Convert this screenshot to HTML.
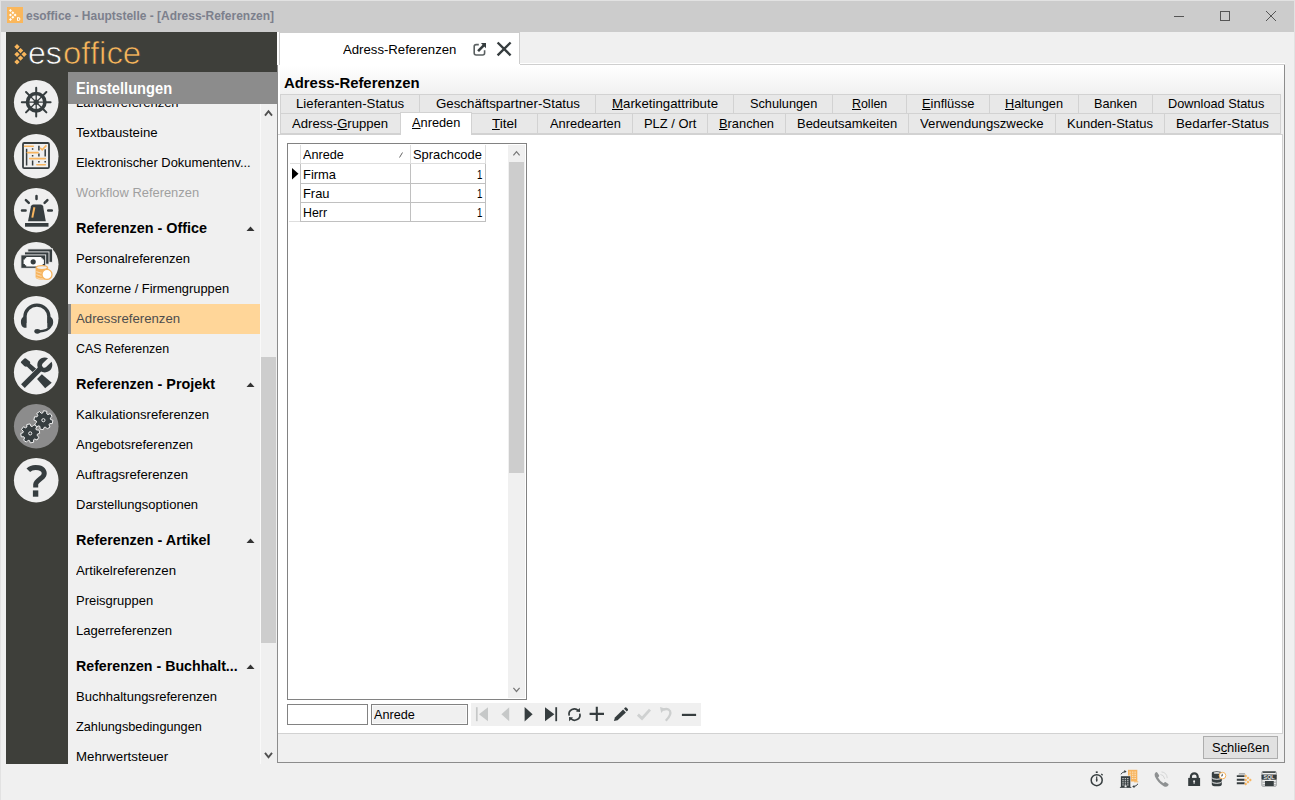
<!DOCTYPE html>
<html lang="de">
<head>
<meta charset="utf-8">
<title>esoffice - Hauptstelle - [Adress-Referenzen]</title>
<style>
*{box-sizing:border-box;margin:0;padding:0}
html,body{width:1295px;height:800px;overflow:hidden;background:#f0f0f0;font-family:"Liberation Sans",sans-serif;font-size:13px;color:#000}
.a{position:absolute}
.t{position:absolute;white-space:pre;line-height:1;transform-origin:0 0;display:block}
u{text-decoration:underline;text-underline-offset:1px}
svg{position:absolute;overflow:visible}
</style>
</head>
<body>
<!-- title bar -->
<div class="a" style="left:0px;top:0px;width:1295px;height:32px;background:#cccccc;"></div>
<div class="a" style="left:0px;top:0px;width:1295px;height:1px;background:#e2e2e2;"></div>
<div class="a" style="left:0px;top:0px;width:1px;height:800px;background:#e2e2e2;"></div>
<div class="a" style="left:1294px;top:0px;width:1px;height:800px;background:#e2e2e2;"></div>
<span class="t" style="left:26.10px;top:10.34px;font-size:12px;font-weight:bold;color:#7c808c;transform:scaleX(0.9974);">esoffice - Hauptstelle - [Adress-Referenzen]</span>
<svg style="left:1160px;top:0" width="135" height="32" viewBox="0 0 135 32" fill="none" stroke="#555" stroke-width="1"><path d="M14 16.5h10"/><rect x="60.5" y="11.5" width="9" height="9"/><path d="M106 11l10 10M116 11l-10 10"/></svg>
<svg style="left:7px;top:7px" width="16" height="16" viewBox="0 0 16 16"><rect width="16" height="16" fill="#fab75c"/><path d="M3.45 2.00L4.90 3.45L3.45 4.90L2.00 3.45zM5.85 4.25L7.30 5.70L5.85 7.15L4.40 5.70zM3.45 6.50L4.90 7.95L3.45 9.40L2.00 7.95zM8.10 6.50L9.55 7.95L8.10 9.40L6.65 7.95zM5.85 8.75L7.30 10.20L5.85 11.65L4.40 10.20zM3.45 11.00L4.90 12.45L3.45 13.90L2.00 12.45z" fill="#fff"/><path d="M10 10.3h1.8q1.6 0 1.6 1.75t-1.6 1.75H10zM11 11.2v1.7h0.7q0.7 0 0.7-0.85t-0.7-0.85z" fill="#fff" fill-rule="evenodd"/></svg>
<!-- sidebar -->
<div class="a" style="left:6px;top:32px;width:271px;height:732px;background:#3e3f3a;"></div>
<svg style="left:0;top:0" width="40" height="70" viewBox="0 0 40 70"><path d="M17.00 44.10L19.70 46.80L17.00 49.50L14.30 46.80zM20.55 47.90L23.25 50.60L20.55 53.30L17.85 50.60zM17.00 51.65L19.70 54.35L17.00 57.05L14.30 54.35zM24.10 51.65L26.80 54.35L24.10 57.05L21.40 54.35zM20.55 55.40L23.25 58.10L20.55 60.80L17.85 58.10zM17.00 59.20L19.70 61.90L17.00 64.60L14.30 61.90z" fill="#f9b65c"/></svg>
<span class="t" style="left:28.00px;top:36.51px;font-size:32px;color:#fff;transform:scaleX(1.0031);-webkit-text-stroke:0.7px #3e3f3a;">es</span>
<span class="t" style="left:62.50px;top:36.51px;font-size:32px;color:#f9b65c;transform:scaleX(1.0302);-webkit-text-stroke:0.7px #3e3f3a;">office</span>
<div class="a" style="left:68px;top:72px;width:209px;height:32px;background:#8c8c8c;"></div>
<div class="a" style="left:68px;top:104px;width:192px;height:660px;background:#f0f0f0;"></div>
<div class="a" style="left:260px;top:104px;width:17px;height:660px;background:#f0f0f0;"></div>
<div class="a" style="left:260px;top:104px;width:1px;height:660px;background:#f9f9f9;"></div>
<div class="a" style="left:261px;top:357px;width:15px;height:286px;background:#cdcdcd;"></div>
<div class="a" style="left:68px;top:304px;width:192px;height:30px;background:#ffd699;"></div>
<div class="a" style="left:68px;top:304px;width:3px;height:30px;background:#8c8c8c;"></div>
<div class="a" style="left:68px;top:104px;width:192px;height:20px;overflow:hidden">
<span class="t" style="left:8.10px;top:-8.00px;transform:scaleX(0.9996);">Länderreferenzen</span>
</div>
<span class="t" style="left:76.10px;top:81.46px;font-size:16px;font-weight:bold;color:#fff;transform:scaleX(0.9161);">Einstellungen</span>
<span class="t" style="left:76.10px;top:126.00px;transform:scaleX(1.0170);">Textbausteine</span>
<span class="t" style="left:76.10px;top:156.00px;transform:scaleX(0.9923);">Elektronischer Dokumentenv...</span>
<span class="t" style="left:76.10px;top:186.00px;color:#a0a0a0;transform:scaleX(0.9924);">Workflow Referenzen</span>
<span class="t" style="left:76.10px;top:252.00px;transform:scaleX(1.0056);">Personalreferenzen</span>
<span class="t" style="left:76.10px;top:282.00px;transform:scaleX(0.9899);">Konzerne / Firmengruppen</span>
<span class="t" style="left:76.10px;top:312.00px;color:#4d4d4d;transform:scaleX(1.0144);">Adressreferenzen</span>
<span class="t" style="left:76.10px;top:342.00px;transform:scaleX(0.9543);">CAS Referenzen</span>
<span class="t" style="left:76.10px;top:408.00px;transform:scaleX(1.0064);">Kalkulationsreferenzen</span>
<span class="t" style="left:76.10px;top:438.00px;transform:scaleX(1.0001);">Angebotsreferenzen</span>
<span class="t" style="left:76.10px;top:468.00px;transform:scaleX(1.0138);">Auftragsreferenzen</span>
<span class="t" style="left:76.10px;top:498.00px;transform:scaleX(0.9997);">Darstellungsoptionen</span>
<span class="t" style="left:76.10px;top:564.00px;transform:scaleX(1.0185);">Artikelreferenzen</span>
<span class="t" style="left:76.10px;top:594.00px;transform:scaleX(0.9970);">Preisgruppen</span>
<span class="t" style="left:76.10px;top:624.00px;transform:scaleX(1.0073);">Lagerreferenzen</span>
<span class="t" style="left:76.10px;top:690.00px;transform:scaleX(1.0012);">Buchhaltungsreferenzen</span>
<span class="t" style="left:76.10px;top:720.00px;transform:scaleX(0.9777);">Zahlungsbedingungen</span>
<span class="t" style="left:76.10px;top:750.00px;transform:scaleX(1.0198);">Mehrwertsteuer</span>
<span class="t" style="left:76.10px;top:221.15px;font-size:14px;font-weight:bold;transform:scaleX(1.0275);">Referenzen - Office</span>
<svg style="left:246px;top:226px" width="9" height="5" viewBox="0 0 9 5"><path d="M0.5 5L4.5 0.6L8.5 5z" fill="#333"/></svg>
<span class="t" style="left:76.10px;top:377.15px;font-size:14px;font-weight:bold;transform:scaleX(1.0275);">Referenzen - Projekt</span>
<svg style="left:246px;top:382px" width="9" height="5" viewBox="0 0 9 5"><path d="M0.5 5L4.5 0.6L8.5 5z" fill="#333"/></svg>
<span class="t" style="left:76.10px;top:533.15px;font-size:14px;font-weight:bold;transform:scaleX(1.0270);">Referenzen - Artikel</span>
<svg style="left:246px;top:538px" width="9" height="5" viewBox="0 0 9 5"><path d="M0.5 5L4.5 0.6L8.5 5z" fill="#333"/></svg>
<span class="t" style="left:76.10px;top:659.15px;font-size:14px;font-weight:bold;transform:scaleX(1.0140);">Referenzen - Buchhalt...</span>
<svg style="left:246px;top:664px" width="9" height="5" viewBox="0 0 9 5"><path d="M0.5 5L4.5 0.6L8.5 5z" fill="#333"/></svg>
<svg style="left:260px;top:104px" width="17" height="17" viewBox="0 0 17 17" fill="none" stroke="#505050" stroke-width="1.9"><path d="M5 11.6L8.5 7.2l3.5 4.4"/></svg>
<svg style="left:260px;top:747px" width="17" height="17" viewBox="0 0 17 17" fill="none" stroke="#505050" stroke-width="1.9"><path d="M5 5.9L8.5 10.3l3.5-4.4"/></svg>
<svg style="left:14px;top:80px" width="45" height="45" viewBox="0 0 45 45"><circle cx="22.2" cy="22.2" r="22.3" fill="#efefef"/><g stroke="#363d3f" fill="none" stroke-linecap="round"><circle cx="22.2" cy="22.2" r="8.7" stroke-width="3.6"/><path d="M22.20 22.20L29.70 22.20M22.20 22.20L27.50 27.50M22.20 22.20L22.20 29.70M22.20 22.20L16.90 27.50M22.20 22.20L14.70 22.20M22.20 22.20L16.90 16.90M22.20 22.20L22.20 14.70M22.20 22.20L27.50 16.90" stroke-width="1.3"/><path d="M32.20 22.20L36.60 22.20M29.27 29.27L32.38 32.38M22.20 32.20L22.20 36.60M15.13 29.27L12.02 32.38M12.20 22.20L7.80 22.20M15.13 15.13L12.02 12.02M22.20 12.20L22.20 7.80M29.27 15.13L32.38 12.02" stroke-width="2"/></g><circle cx="22.2" cy="22.2" r="2.6" fill="#363d3f"/></svg>
<svg style="left:14px;top:134px" width="45" height="45" viewBox="0 0 45 45"><circle cx="22.2" cy="22.2" r="22.3" fill="#efefef"/><rect x="9" y="9" width="26" height="25.2" rx="1.2" fill="none" stroke="#363d3f" stroke-width="1.8"/><g stroke="#363d3f" stroke-width="1.5" fill="none"><path d="M12.6 14.7V31.5M18.6 14.3v1.5M18.6 20.9v1.5M18.6 26.6v4.9M24.9 11.7v4.8M24.9 19.5v3M24.9 26.9v1.5M31.2 15.2v7.3M31.2 26.9v1.5"/></g><g stroke="#f7b45e" stroke-width="1.6" fill="none" stroke-linecap="round"><path d="M10.6 12.2h8.7M13.3 18.6h10.8M15.7 24.6h15.6M22.9 30.7h8.4"/><path d="M26.1 13.8l2.1 2.1l4.2-4.5" stroke-linecap="butt"/></g></svg>
<svg style="left:14px;top:188px" width="45" height="45" viewBox="0 0 45 45"><circle cx="22.2" cy="22.2" r="22.3" fill="#efefef"/><rect x="11" y="35" width="23.5" height="3.7" fill="#363d3f"/><path d="M14 33.3L17 18.3Q17.4 16.4 19.4 16.4H26.7Q28.7 16.4 29.1 18.3L31.8 33.3z" fill="#363d3f"/><path d="M20.4 19.2L18.3 29.6" stroke="#f7b45e" stroke-width="2"/><g stroke="#363d3f" stroke-width="2.5" stroke-linecap="round"><path d="M22.5 8v3M11.9 12.1l2.9 2.7M33.4 12.1l-2.8 2.8M8 22.5h3.6M34.2 22.5h3.6"/></g></svg>
<svg style="left:14px;top:242px" width="45" height="45" viewBox="0 0 45 45"><circle cx="22.2" cy="22.2" r="22.3" fill="#efefef"/><g fill="#363d3f" stroke="#efefef" stroke-width="0.9"><rect x="13.8" y="6.9" width="24.8" height="13.4"/><rect x="10.5" y="9.9" width="24.5" height="12.3"/><rect x="6.9" y="12.9" width="24.8" height="13.4"/></g><path d="M12.2 15h15.2v1.3h1.3v1.3h1.2v4.4h-1.2v1.3h-1.3v1.3H12.2v-1.3h-1.3v-1.3H9.6v-4.4h1.3v-1.3h1.3z" fill="#fbfbfb"/><circle cx="19.2" cy="19.8" r="2.6" fill="#363d3f"/><path d="M21.6 25.6V35.2A6.3 2.6 0 0 0 34.2 35.2V25.6z" fill="#f7b45e"/><ellipse cx="27.9" cy="25.6" rx="5.6" ry="2" fill="#efefef" stroke="#f7b45e" stroke-width="1.3"/><g fill="none" stroke="#fbe3c2" stroke-width="0.8"><path d="M22.4 29.6Q27 32 31 30.8M22.4 32.7Q27 35.1 31 33.9M22.4 35.6Q26 37.6 30 36.8"/></g><circle cx="33" cy="32.4" r="5" fill="#fff" stroke="#f7b45e" stroke-width="1.3"/></svg>
<svg style="left:14px;top:296px" width="45" height="45" viewBox="0 0 45 45"><circle cx="22.2" cy="22.2" r="22.3" fill="#efefef"/><path d="M10.8 27V21.2A12.1 12.1 0 0 1 35 21.2V27" fill="none" stroke="#363d3f" stroke-width="3.3"/><path d="M12.5 20.4V31.7H10.2Q6.9 30.5 6.9 26T10.2 20.4zM33.3 20.4V31.7H35.6Q39.2 30.5 39.2 26T35.6 20.4z" fill="#363d3f"/><path d="M36.3 30.5Q34 35 25 35.4" fill="none" stroke="#363d3f" stroke-width="2.5"/><ellipse cx="23.3" cy="35.3" rx="3" ry="2.4" fill="#363d3f"/></svg>
<svg style="left:14px;top:350px" width="45" height="45" viewBox="0 0 45 45"><circle cx="22.2" cy="22.2" r="22.3" fill="#efefef"/><path d="M23.05 29.05L27.85 24.25L37.75 32.65L31.15 38.35z" fill="#363d3f"/><path d="M7.2 11.4L10.4 8.6Q11.2 8 12 8.6L15.8 11.6Q16.6 12.6 16 13.6L22.2 18.8L18.6 22L12.8 16.6Q11.4 17 10.2 16L7 12.8Q6.6 12 7.2 11.4z" fill="#363d3f"/><path d="M8.9 36.1L27.5 17.5" stroke="#363d3f" stroke-width="5.2" fill="none"/><path d="M34.03 8.13A7.50 7.50 0 1 0 37.57 11.67L32.14 17.09A2.50 2.50 0 0 1 28.61 13.56z" fill="#363d3f"/></svg>
<svg style="left:14px;top:404px" width="45" height="45" viewBox="0 0 45 45"><circle cx="22.2" cy="22.2" r="22.3" fill="#8c8c8c"/><g fill="#363d3f" stroke="#f4f4f4" stroke-width="0.9" stroke-linejoin="round"><path d="M36.29 14.11L38.75 14.53L38.75 17.87L36.29 18.29L35.75 19.59L37.19 21.63L34.83 23.99L32.79 22.55L31.49 23.09L31.07 25.55L27.73 25.55L27.31 23.09L26.01 22.55L23.97 23.99L21.61 21.63L23.05 19.59L22.51 18.29L20.05 17.87L20.05 14.53L22.51 14.11L23.05 12.81L21.61 10.77L23.97 8.41L26.01 9.85L27.31 9.31L27.73 6.85L31.07 6.85L31.49 9.31L32.79 9.85L34.83 8.41L37.19 10.77L35.75 12.81z" transform="rotate(11 29.4 16.2)"/><path d="M23.09 27.31L25.55 27.73L25.55 31.07L23.09 31.49L22.55 32.79L23.99 34.83L21.63 37.19L19.59 35.75L18.29 36.29L17.87 38.75L14.53 38.75L14.11 36.29L12.81 35.75L10.77 37.19L8.41 34.83L9.85 32.79L9.31 31.49L6.85 31.07L6.85 27.73L9.31 27.31L9.85 26.01L8.41 23.97L10.77 21.61L12.81 23.05L14.11 22.51L14.53 20.05L17.87 20.05L18.29 22.51L19.59 23.05L21.63 21.61L23.99 23.97L22.55 26.01z" transform="rotate(-11 16.2 29.4)"/></g><circle cx="29.4" cy="16.2" r="1.6" fill="#363d3f" stroke="#eee" stroke-width="1"/><circle cx="16.2" cy="29.4" r="1.6" fill="#363d3f" stroke="#eee" stroke-width="1"/></svg>
<svg style="left:14px;top:458px" width="45" height="45" viewBox="0 0 45 45"><circle cx="22.2" cy="22.2" r="22.3" fill="#efefef"/><path d="M14.3 12.2C16.5 9.9 21 9.1 24.6 9.7C29.6 10.6 31.2 14.6 29.6 17.6C28 20.6 22 22.4 21.7 26.4V29.6" fill="none" stroke="#363d3f" stroke-width="5"/><rect x="18.9" y="32.4" width="5.4" height="6.3" fill="#363d3f"/></svg>
<!-- content -->
<div class="a" style="left:277px;top:32px;width:243px;height:33px;background:#fff;"></div>
<div class="a" style="left:279px;top:32px;width:241px;height:1px;background:#cccccc;"></div>
<div class="a" style="left:279px;top:32px;width:1px;height:33px;background:#cccccc;"></div>
<div class="a" style="left:519px;top:32px;width:1px;height:32px;background:#cdcdcd;"></div>
<div class="a" style="left:520px;top:63px;width:765px;height:1px;background:#fff;"></div>
<div class="a" style="left:520px;top:64px;width:765px;height:1px;background:#cfcfcf;"></div>
<span class="t" style="left:342.90px;top:43.00px;transform:scaleX(1.0125);">Adress-Referenzen</span>
<div class="a" style="left:277px;top:65px;width:1008px;height:698px;border-left:1px solid #8c8c8c;border-right:1px solid #8c8c8c;border-bottom:1px solid #8c8c8c;background:linear-gradient(#fff 0,#f0f0f0 30px,#f0f0f0 100%);"></div>
<span class="t" style="left:284.20px;top:75.30px;font-size:15px;font-weight:bold;transform:scaleX(0.9918);">Adress-Referenzen</span>
<div class="a" style="left:278px;top:65px;width:2px;height:669px;background:#fff;"></div>
<div class="a" style="left:280px;top:94px;width:1001px;height:20px;background:#e8e8e8;border:1px solid #d2d2d2;"></div>
<div class="a" style="left:280px;top:114px;width:1001px;height:20px;background:#e8e8e8;border:1px solid #d2d2d2;border-top:0;"></div>
<div class="a" style="left:419px;top:94px;width:1px;height:20px;background:#d2d2d2;"></div>
<div class="a" style="left:595px;top:94px;width:1px;height:20px;background:#d2d2d2;"></div>
<div class="a" style="left:733px;top:94px;width:1px;height:20px;background:#d2d2d2;"></div>
<div class="a" style="left:832px;top:94px;width:1px;height:20px;background:#d2d2d2;"></div>
<div class="a" style="left:906px;top:94px;width:1px;height:20px;background:#d2d2d2;"></div>
<div class="a" style="left:989px;top:94px;width:1px;height:20px;background:#d2d2d2;"></div>
<div class="a" style="left:1078px;top:94px;width:1px;height:20px;background:#d2d2d2;"></div>
<div class="a" style="left:1152px;top:94px;width:1px;height:20px;background:#d2d2d2;"></div>
<div class="a" style="left:400px;top:114px;width:1px;height:20px;background:#d2d2d2;"></div>
<div class="a" style="left:471px;top:114px;width:1px;height:20px;background:#d2d2d2;"></div>
<div class="a" style="left:537px;top:114px;width:1px;height:20px;background:#d2d2d2;"></div>
<div class="a" style="left:632px;top:114px;width:1px;height:20px;background:#d2d2d2;"></div>
<div class="a" style="left:707px;top:114px;width:1px;height:20px;background:#d2d2d2;"></div>
<div class="a" style="left:785px;top:114px;width:1px;height:20px;background:#d2d2d2;"></div>
<div class="a" style="left:908px;top:114px;width:1px;height:20px;background:#d2d2d2;"></div>
<div class="a" style="left:1055px;top:114px;width:1px;height:20px;background:#d2d2d2;"></div>
<div class="a" style="left:1164px;top:114px;width:1px;height:20px;background:#d2d2d2;"></div>
<div class="a" style="left:278px;top:134px;width:1005px;height:600px;background:#fff;border:1px solid #d2d2d2;border-left:0;"></div>
<div class="a" style="left:400px;top:112px;width:72px;height:23px;background:#fff;border:1px solid #d2d2d2;border-bottom:0;"></div>
<span class="t" style="left:295.60px;top:97.00px;transform:scaleX(1.0176);">Lieferanten-Status</span>
<span class="t" style="left:435.80px;top:97.00px;transform:scaleX(1.0220);">Geschäftspartner-Status</span>
<span class="t" style="left:612.00px;top:97.00px;transform:scaleX(1.0186);"><u>M</u>arketingattribute</span>
<span class="t" style="left:750.10px;top:97.00px;transform:scaleX(0.9800);">Schulungen</span>
<span class="t" style="left:851.90px;top:97.00px;transform:scaleX(0.9550);"><u>R</u>ollen</span>
<span class="t" style="left:921.60px;top:97.00px;transform:scaleX(0.9934);"><u>E</u>inflüsse</span>
<span class="t" style="left:1004.90px;top:97.00px;transform:scaleX(0.9784);"><u>H</u>altungen</span>
<span class="t" style="left:1093.90px;top:97.00px;transform:scaleX(0.9775);">Banken</span>
<span class="t" style="left:1168.20px;top:97.00px;transform:scaleX(0.9798);">Download Status</span>
<span class="t" style="left:292.10px;top:117.00px;transform:scaleX(1.0074);">Adress-<u>G</u>ruppen</span>
<span class="t" style="left:411.60px;top:116.00px;transform:scaleX(0.9826);"><u>A</u>nreden</span>
<span class="t" style="left:492.10px;top:117.00px;transform:scaleX(1.0424);"><u>T</u>itel</span>
<span class="t" style="left:550.10px;top:117.00px;transform:scaleX(0.9907);">Anredearten</span>
<span class="t" style="left:644.10px;top:117.00px;transform:scaleX(0.9937);">PLZ / Ort</span>
<span class="t" style="left:718.80px;top:117.00px;transform:scaleX(0.9882);"><u>B</u>ranchen</span>
<span class="t" style="left:797.10px;top:117.00px;transform:scaleX(0.9975);">Bedeutsamkeiten</span>
<span class="t" style="left:920.20px;top:117.00px;transform:scaleX(1.0128);">Verwendungszwecke</span>
<span class="t" style="left:1066.70px;top:117.00px;transform:scaleX(0.9998);">Kunden-Status</span>
<span class="t" style="left:1175.80px;top:117.00px;transform:scaleX(1.0215);">Bedarfer-Status</span>
<!-- grid -->
<div class="a" style="left:287px;top:143px;width:240px;height:557px;background:#fff;border:1px solid #828282;"></div>
<div class="a" style="left:300px;top:145px;width:1px;height:18px;background:#dedede;"></div>
<div class="a" style="left:410px;top:145px;width:1px;height:18px;background:#dedede;"></div>
<div class="a" style="left:485px;top:145px;width:1px;height:18px;background:#dedede;"></div>
<div class="a" style="left:290px;top:163px;width:196px;height:1px;background:#dedede;"></div>
<div class="a" style="left:301px;top:183px;width:185px;height:1px;background:#c0c0c0;"></div>
<div class="a" style="left:301px;top:202px;width:185px;height:1px;background:#c0c0c0;"></div>
<div class="a" style="left:301px;top:221px;width:185px;height:1px;background:#c0c0c0;"></div>
<div class="a" style="left:289px;top:221px;width:12px;height:1px;background:#dedede;"></div>
<div class="a" style="left:300px;top:164px;width:1px;height:58px;background:#c0c0c0;"></div>
<div class="a" style="left:410px;top:164px;width:1px;height:58px;background:#c0c0c0;"></div>
<div class="a" style="left:485px;top:164px;width:1px;height:58px;background:#c0c0c0;"></div>
<span class="t" style="left:302.80px;top:148.00px;transform:scaleX(0.9756);">Anrede</span>
<span class="t" style="left:413.10px;top:148.00px;transform:scaleX(0.9929);">Sprachcode</span>
<span class="t" style="left:303.20px;top:168.00px;transform:scaleX(0.9934);">Firma</span>
<span class="t" style="left:476.60px;top:168.00px;transform:scaleX(0.7464);">1</span>
<span class="t" style="left:303.20px;top:187.00px;transform:scaleX(0.9912);">Frau</span>
<span class="t" style="left:476.60px;top:187.00px;transform:scaleX(0.7464);">1</span>
<span class="t" style="left:303.20px;top:206.00px;transform:scaleX(0.9493);">Herr</span>
<span class="t" style="left:476.60px;top:206.00px;transform:scaleX(0.7464);">1</span>
<svg style="left:292px;top:168px" width="7" height="12" viewBox="0 0 7 12"><path d="M0 0L6.5 5.75L0 11.5z" fill="#000"/></svg>
<svg style="left:398px;top:151px" width="6" height="8" viewBox="0 0 6 8"><path d="M1.5 6.5L4.5 1.5" stroke="#666" stroke-width="1" fill="none"/></svg>
<div class="a" style="left:508px;top:145px;width:17px;height:553px;background:#f0f0f0;"></div>
<div class="a" style="left:509px;top:162px;width:15px;height:311px;background:#cdcdcd;"></div>
<svg style="left:508px;top:145px" width="17" height="17" viewBox="0 0 17 17" fill="none" stroke="#777" stroke-width="1.2"><path d="M5.4 10.3l3.1-3.6l3.1 3.6"/></svg>
<svg style="left:508px;top:681px" width="17" height="17" viewBox="0 0 17 17" fill="none" stroke="#777" stroke-width="1.2"><path d="M5.4 6.9l3.1 3.6l3.1-3.6"/></svg>
<div class="a" style="left:287px;top:704px;width:81px;height:21px;background:#fff;border:1px solid #828282;"></div>
<div class="a" style="left:371px;top:704px;width:97px;height:21px;background:#f0f0f0;border:1px solid #828282;box-shadow:inset 0 0 0 1px #fafafa;"></div>
<span class="t" style="left:374.40px;top:708.00px;transform:scaleX(0.9732);">Anrede</span>
<div class="a" style="left:471px;top:703px;width:230px;height:23px;background:#f0f0f0;"></div>
<div class="a" style="left:1203px;top:736px;width:75px;height:23px;background:#e1e1e1;border:1px solid #adadad;"></div>
<span class="t" style="left:1212.10px;top:741.00px;transform:scaleX(0.9946);">S<u>c</u>hließen</span>
<svg style="left:470px;top:40px" width="46" height="20" viewBox="0 0 46 20"><path d="M8.8 4.6H6.2Q4.2 4.6 4.2 6.6V13Q4.2 15 6.2 15H12.6Q14.6 15 14.6 13V10.2" fill="none" stroke="#5a6061" stroke-width="1.6"/><path d="M8.1 11.1L14 5.2" stroke="#363d3f" stroke-width="2.6" fill="none"/><path d="M10.9 3.1H16V8.2z" fill="#363d3f"/><path d="M27.6 2.5L40.6 15.4M40.6 2.5L27.6 15.4" stroke="#363d3f" stroke-width="2.4" fill="none"/></svg>
<svg style="left:471px;top:703px" width="23" height="23" viewBox="0 0 23 23"><path d="M5.8 4.2V18.2" stroke="#c6c8c8" stroke-width="1.7"/><path d="M17 4.2V18.2L8 11.2z" fill="#c6c8c8"/></svg>
<svg style="left:494px;top:703px" width="23" height="23" viewBox="0 0 23 23"><path d="M15.2 4.2V18.2L7.4 11.2z" fill="#c6c8c8"/></svg>
<svg style="left:517px;top:703px" width="23" height="23" viewBox="0 0 23 23"><path d="M7.6 4V18.4L15.6 11.2z" fill="#363d3f"/></svg>
<svg style="left:540px;top:703px" width="23" height="23" viewBox="0 0 23 23"><path d="M5 4.2V18.2L14.4 11.2z" fill="#363d3f"/><path d="M16.2 4.2V18.2" stroke="#363d3f" stroke-width="1.8"/></svg>
<svg style="left:563px;top:703px" width="23" height="23" viewBox="0 0 23 23"><g fill="none" stroke="#363d3f" stroke-width="1.7"><path d="M6.2 12.6A5.3 5.3 0 0 1 15.4 7.9"/><path d="M16.8 10.6A5.3 5.3 0 0 1 7.6 15.3"/></g><path d="M12.9 8.6L17 9.1L16.9 5z" fill="#363d3f"/><path d="M10.1 14.6L6 14.1L6.1 18.2z" fill="#363d3f"/></svg>
<svg style="left:586px;top:703px" width="23" height="23" viewBox="0 0 23 23"><path d="M10.8 3.8V18M3.6 10.9H18" stroke="#363d3f" stroke-width="2.1" fill="none"/></svg>
<svg style="left:609px;top:703px" width="23" height="23" viewBox="0 0 23 23"><path d="M4.9 18L5.9 14.6L14.1 6.6L16.9 9.4L8.6 17.3z" fill="#363d3f"/><path d="M15 5.7L16.1 4.6Q16.7 4.1 17.3 4.6L18.8 6.1Q19.3 6.7 18.8 7.3L17.7 8.4z" fill="#363d3f"/></svg>
<svg style="left:632px;top:703px" width="23" height="23" viewBox="0 0 23 23"><path d="M5.9 11.6L10 15.4L18 6.6" fill="none" stroke="#cfd1d1" stroke-width="2.8"/></svg>
<svg style="left:655px;top:703px" width="23" height="23" viewBox="0 0 23 23"><path d="M8 6.9Q13 4.6 15 8Q16.8 11.6 10.8 17.8" fill="none" stroke="#cdcfcf" stroke-width="2.3"/><path d="M5 4L10 5.6L6.2 9.9z" fill="#cdcfcf"/></svg>
<svg style="left:678px;top:703px" width="23" height="23" viewBox="0 0 23 23"><path d="M3.9 11.9H18.1" stroke="#363d3f" stroke-width="2.2"/></svg>
<svg style="left:1084px;top:764px" width="100" height="30" viewBox="0 0 100 30"><circle cx="12.7" cy="16.2" r="5.5" fill="none" stroke="#363d3f" stroke-width="1.5"/><rect x="11.8" y="7.4" width="1.9" height="1.6" fill="#363d3f"/><path d="M17.3 9.9l1.3 1.3" stroke="#363d3f" stroke-width="1.3"/><path d="M12.7 12.6V17.4" stroke="#363d3f" stroke-width="1.2"/><path d="M11.6 15.6h2.2l-1.1 2.2z" fill="#363d3f"/><rect x="44" y="5.8" width="9.3" height="11.7" fill="#f7b45e"/><path d="M50 17.4h4.3v0.9H50z" fill="#f7b45e"/><g fill="#fde6c6"><rect x="45.4" y="7.6" width="1.5" height="1"/><rect x="47.9" y="7.6" width="1.5" height="1"/><rect x="50.4" y="7.6" width="1.5" height="1"/><rect x="45.4" y="9.7" width="1.5" height="1"/><rect x="47.9" y="9.7" width="1.5" height="1"/><rect x="50.4" y="9.7" width="1.5" height="1"/><rect x="45.4" y="11.8" width="1.5" height="1"/><rect x="47.9" y="11.8" width="1.5" height="1"/><rect x="50.4" y="11.8" width="1.5" height="1"/><rect x="45.4" y="13.9" width="1.5" height="1"/><rect x="47.9" y="13.9" width="1.5" height="1"/><rect x="50.4" y="13.9" width="1.5" height="1"/></g><rect x="36.3" y="11.6" width="10.6" height="11.8" fill="#f0f0f0"/><rect x="36.9" y="12.2" width="9.4" height="11" fill="#363d3f"/><path d="M35.9 22.9h11.4v0.9H35.9z" fill="#363d3f"/><g fill="#d4d6d6"><rect x="38.3" y="14.1" width="1.4" height="1.1"/><rect x="40.7" y="14.1" width="1.4" height="1.1"/><rect x="43.1" y="14.1" width="1.4" height="1.1"/><rect x="38.3" y="16.2" width="1.4" height="1.1"/><rect x="40.7" y="16.2" width="1.4" height="1.1"/><rect x="43.1" y="16.2" width="1.4" height="1.1"/><rect x="38.3" y="18.3" width="1.4" height="1.1"/><rect x="40.7" y="18.3" width="1.4" height="1.1"/><rect x="43.1" y="18.3" width="1.4" height="1.1"/><rect x="38.3" y="20.4" width="1.4" height="1.1"/><rect x="40.7" y="20.4" width="1.4" height="1.1"/><rect x="43.1" y="20.4" width="1.4" height="1.1"/></g><rect x="40.6" y="21.4" width="2" height="1.9" fill="#f0f0f0"/><path d="M36.8 10.3Q38.6 7.9 41 7.6" fill="none" stroke="#363d3f" stroke-width="1"/><path d="M40.2 6.1l2.4 1.3l-2 1.7z" fill="#363d3f"/><path d="M54 19.8Q52.2 22.2 49.8 22.6" fill="none" stroke="#363d3f" stroke-width="1"/><path d="M50.6 24l-2.4-1.3l2-1.7z" fill="#363d3f"/><g transform="translate(71 8) scale(0.93) translate(-71 -8)"><path d="M71.6 8.6Q72.6 7.6 73.4 8.6L75.4 11.6Q75.8 12.4 75 13.2L74.2 14Q76.4 18.2 80.2 20L81 19.2Q81.8 18.6 82.6 19L85.4 21Q86 21.8 85.2 22.6Q83.2 24.8 80.4 23.2Q73.8 19.6 70.8 12.6Q70 10 71.6 8.6z" fill="#8e9192"/><path d="M76.8 10.6Q80.6 11 81.4 15.4M78 7.9Q83.6 8.4 84.2 14.6" fill="none" stroke="#cfd0d0" stroke-width="0.9"/></g></svg>
<svg style="left:1182px;top:764px" width="100" height="30" viewBox="0 0 100 30"><path d="M8.9 14.4V12.8A3.4 3.5 0 0 1 15.7 12.8V14.4" fill="none" stroke="#363d3f" stroke-width="2.2"/><rect x="6.2" y="13.9" width="11.9" height="8.1" fill="#363d3f"/><circle cx="12.1" cy="17.2" r="1" fill="#f0f0f0"/><rect x="11.6" y="17.4" width="1" height="2.4" fill="#f0f0f0"/><path d="M29.8 9.4V20.4A5 1.9 0 0 0 39.8 20.4V9.4z" fill="#363d3f"/><ellipse cx="34.8" cy="9.2" rx="5" ry="1.9" fill="#363d3f"/><ellipse cx="34.8" cy="8.9" rx="3.2" ry="0.9" fill="#e4e5e5"/><path d="M29.8 13.4A5 1.9 0 0 0 39.8 13.4M29.8 17.4A5 1.9 0 0 0 39.8 17.4" fill="none" stroke="#f0f0f0" stroke-width="1"/><circle cx="40.5" cy="11.6" r="3.3" fill="#fff" stroke="#f7b45e" stroke-width="1"/><path d="M40.3 9.8V11.9h-1.2" fill="none" stroke="#363d3f" stroke-width="0.8"/><path d="M57.2 9.2h5.6l0.8 1.3h-7.2z" fill="#9a9d9d"/><path d="M54.8 12.1h7.8M54.8 15.7h7.8M54.8 19.3h7.8" stroke="#363d3f" stroke-width="1.9"/><path d="M63.70 10.50L65.20 12.00L63.70 13.50L62.20 12.00zM66.00 12.40L67.50 13.90L66.00 15.40L64.50 13.90zM68.30 14.40L69.80 15.90L68.30 17.40L66.80 15.90zM66.00 16.60L67.50 18.10L66.00 19.60L64.50 18.10zM63.70 18.60L65.20 20.10L63.70 21.60L62.20 20.10zM63.70 14.40L65.20 15.90L63.70 17.40L62.20 15.90z" fill="#f7b45e"/><rect x="79.9" y="7.5" width="14.4" height="14.8" rx="1" fill="none" stroke="#8a8e8f" stroke-width="0.8"/><rect x="80.6" y="7.5" width="13" height="1.4" fill="#363d3f"/><rect x="79.6" y="10.4" width="15" height="5.4" rx="0.8" fill="#363d3f"/><rect x="83" y="17" width="8.8" height="5" fill="#363d3f"/><path d="M80.6 18.2h2.4M91.8 18.2h2M80.6 20.8h2.4M91.8 20.8h2" stroke="#777b7c" stroke-width="0.7"/><text x="87.1" y="15" font-size="5.6" font-weight="bold" text-anchor="middle" fill="#e8e8e8" font-family="Liberation Sans,sans-serif" textLength="11" lengthAdjust="spacingAndGlyphs">SQL</text></svg>
</body>
</html>
